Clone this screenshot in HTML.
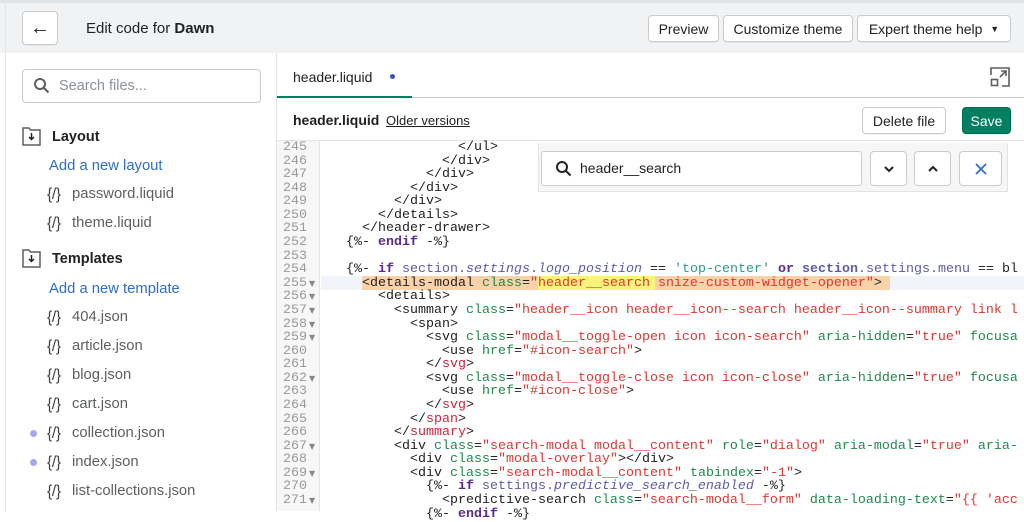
<!DOCTYPE html>
<html><head><meta charset="utf-8"><style>
*{margin:0;padding:0;box-sizing:border-box}
body{width:1024px;height:511px;overflow:hidden;background:#fff;font-family:"Liberation Sans",sans-serif;color:#202223;position:relative}
.abs{position:absolute}
.btn{position:absolute;border:1px solid #c9cccf;border-radius:4px;background:#fff;font-size:14px;color:#202223;display:flex;align-items:center;justify-content:center;box-shadow:0 1px 0 rgba(0,0,0,.05)}
.side{font-size:14px;position:absolute;white-space:nowrap}
.ic{position:absolute;left:47px;font-size:15.5px;color:#3d4145;letter-spacing:-0.3px}
.fn{position:absolute;left:72px;color:#5c5f62;font-size:14.8px}
.dot{position:absolute;left:30px;width:7px;height:7px;border-radius:50%;background:#a4a8ee}
pre{position:absolute;left:314px;font-family:"Liberation Mono",monospace;font-size:13.33px;line-height:13.58px;color:#222;white-space:pre}
.g{position:absolute;left:277px;width:43px;top:141px;bottom:0;background:#f7f7f7;border-right:1px solid #e4e4e4}
.ln{position:absolute;left:277px;width:30px;text-align:right;font-family:"Liberation Mono",monospace;font-size:13.33px;line-height:13.58px;color:#999;white-space:pre}
.fa{position:absolute;left:309px;font-family:"DejaVu Sans",sans-serif;font-size:8px;line-height:13.58px;color:#888;white-space:pre}
.a{color:#1e8a4c}.s{color:#e8332f}.k{color:#5b2a95;font-weight:bold}.v{color:#5c5ca8}.i{font-style:italic}.t{color:#2b9a8e}.r{color:#d4223a}
</style></head><body>
<div class="abs" style="left:0;top:0;width:1024px;height:3px;background:#e1e3e5"></div>
<div class="abs" style="left:0;top:3px;width:1024px;height:50px;background:#f1f2f4"></div>
<div class="abs" style="left:5px;top:3px;width:1px;height:508px;background:#e1e3e5"></div>
<div class="btn" style="left:22px;top:11px;width:36px;height:34px;font-size:20px">&#8592;</div>
<div class="abs" style="left:86px;top:20px;font-size:15px">Edit code for <b>Dawn</b></div>
<div class="btn" style="left:648px;top:15px;width:71px;height:27px">Preview</div>
<div class="btn" style="left:723px;top:15px;width:130px;height:27px">Customize theme</div>
<div class="btn" style="left:857px;top:15px;width:154px;height:27px">Expert theme help&nbsp;&nbsp;<span style="font-size:9px">&#9660;</span></div>
<div class="abs" style="left:276px;top:53px;width:1px;height:458px;background:#e1e3e5"></div>
<div class="btn" style="left:22px;top:69px;width:239px;height:34px;justify-content:flex-start;padding-left:36px;color:#8c9196;box-shadow:none;font-size:14.5px">Search files...</div>
<svg class="abs" style="left:33px;top:77px" width="17" height="17" viewBox="0 0 17 17"><circle cx="7" cy="7" r="5" fill="none" stroke="#5c5f62" stroke-width="2"/><path d="M11 11l4.5 4.5" stroke="#5c5f62" stroke-width="2"/></svg>
<svg class="abs" style="left:22px;top:127px" width="19" height="19" viewBox="0 0 19 19"><path d="M1 1h6l1.5 2H18v15H1z" fill="none" stroke="#5c5f62" stroke-width="1.5"/><path d="M9.5 6v6M7 10l2.5 2.5L12 10" fill="none" stroke="#202223" stroke-width="1.5"/></svg>
<div class="side" style="left:52px;top:129px;font-weight:bold;font-size:14.5px">Layout</div>
<div class="side" style="left:49px;top:158px;color:#2c6ecb;font-size:14.8px">Add a new layout</div>
<div class="side" style="top:186px;width:276px"><span class="ic">{/}</span><span class="fn">password.liquid</span></div>
<div class="side" style="top:215px;width:276px"><span class="ic">{/}</span><span class="fn">theme.liquid</span></div>
<svg class="abs" style="left:22px;top:249px" width="19" height="19" viewBox="0 0 19 19"><path d="M1 1h6l1.5 2H18v15H1z" fill="none" stroke="#5c5f62" stroke-width="1.5"/><path d="M9.5 6v6M7 10l2.5 2.5L12 10" fill="none" stroke="#202223" stroke-width="1.5"/></svg>
<div class="side" style="left:52px;top:251px;font-weight:bold;font-size:14.5px">Templates</div>
<div class="side" style="left:49px;top:281px;color:#2c6ecb;font-size:14.8px">Add a new template</div>
<div class="side" style="top:309px;width:276px"><span class="ic">{/}</span><span class="fn">404.json</span></div>
<div class="side" style="top:338px;width:276px"><span class="ic">{/}</span><span class="fn">article.json</span></div>
<div class="side" style="top:367px;width:276px"><span class="ic">{/}</span><span class="fn">blog.json</span></div>
<div class="side" style="top:396px;width:276px"><span class="ic">{/}</span><span class="fn">cart.json</span></div>
<div class="side" style="top:425px;width:276px"><span class="dot" style="top:5px"></span><span class="ic">{/}</span><span class="fn">collection.json</span></div>
<div class="side" style="top:454px;width:276px"><span class="dot" style="top:5px"></span><span class="ic">{/}</span><span class="fn">index.json</span></div>
<div class="side" style="top:483px;width:276px"><span class="ic">{/}</span><span class="fn">list-collections.json</span></div>
<div class="abs" style="left:293px;top:69px;font-size:14px;color:#202223">header.liquid</div>
<div class="abs" style="left:390px;top:74px;width:5px;height:5px;border-radius:50%;background:#3b4fc4"></div>
<div class="abs" style="left:277px;top:97px;width:747px;height:1px;background:#c9cccf"></div>
<div class="abs" style="left:277px;top:96px;width:135px;height:2px;background:#008060"></div>
<svg class="abs" style="left:990px;top:67px" width="20" height="20" viewBox="0 0 20 20"><path d="M1 8V1h18v18h-7" fill="none" stroke="#5c5f62" stroke-width="1.6"/><rect x="1.5" y="12.5" width="6" height="6" fill="none" stroke="#5c5f62" stroke-width="1.6"/><path d="M10 10l6-6M11 4h5v5" fill="none" stroke="#5c5f62" stroke-width="1.6"/></svg>
<div class="abs" style="left:293px;top:112px;font-size:14px;font-weight:bold">header.liquid</div>
<div class="abs" style="left:386px;top:113px;font-size:13px;text-decoration:underline">Older versions</div>
<div class="btn" style="left:862px;top:107px;width:84px;height:27px">Delete file</div>
<div class="btn" style="left:962px;top:107px;width:49px;height:27px;background:#008060;border-color:#006e52;color:#fff">Save</div>
<div class="abs" style="left:277px;top:140px;width:747px;height:1px;background:#e4e5e7"></div>
<div class="g"></div>
<div class="abs" style="left:321px;top:276px;width:703px;height:14px;background:#f1f4f8"></div>
<div class="abs" style="left:362px;top:276px;width:528px;height:14px;background:#f9d2aa"></div>
<div class="abs" style="left:538px;top:276px;width:117px;height:14px;background:#fbf47c"></div>
<div class="ln" style="top:141px">245
246
247
248
249
250
251
252
253
254
255
256
257
258
259
260
261
262
263
264
265
266
267
268
269
270
271</div>
<div class="fa" style="top:141px">









&#9660;
&#9660;
&#9660;
&#9660;
&#9660;


&#9660;




&#9660;

&#9660;

&#9660;</div>
<pre style="top:141px">                  &lt;/ul&gt;
                &lt;/div&gt;
              &lt;/div&gt;
            &lt;/div&gt;
          &lt;/div&gt;
        &lt;/details&gt;
      &lt;/header-drawer&gt;
    {%- <span class="k">endif</span> -%}

    {%- <span class="k">if</span> <span class="v">section.<span class="i">settings</span>.<span class="i">logo_position</span></span> == <span class="t">'top-center'</span> <span class="k">or</span> <span class="v"><b>section</b>.settings.menu</span> == bl
      &lt;details-modal <span class="a">class</span>=<span class="s">"header__search snize-custom-widget-opener"</span>&gt;
        &lt;details&gt;
          &lt;summary <span class="a">class</span>=<span class="s">"header__icon header__icon--search header__icon--summary link l</span>
            &lt;span&gt;
              &lt;svg <span class="a">class</span>=<span class="s">"modal__toggle-open icon icon-search"</span> <span class="a">aria-hidden</span>=<span class="s">"true"</span> <span class="a">focusa</span>
                &lt;use <span class="a">href</span>=<span class="s">"#icon-search"</span>&gt;
              &lt;/<span class="r">svg</span>&gt;
              &lt;svg <span class="a">class</span>=<span class="s">"modal__toggle-close icon icon-close"</span> <span class="a">aria-hidden</span>=<span class="s">"true"</span> <span class="a">focusa</span>
                &lt;use <span class="a">href</span>=<span class="s">"#icon-close"</span>&gt;
              &lt;/<span class="r">svg</span>&gt;
            &lt;/<span class="r">span</span>&gt;
          &lt;/<span class="r">summary</span>&gt;
          &lt;div <span class="a">class</span>=<span class="s">"search-modal modal__content"</span> <span class="a">role</span>=<span class="s">"dialog"</span> <span class="a">aria-modal</span>=<span class="s">"true"</span> <span class="a">aria-</span>
            &lt;div <span class="a">class</span>=<span class="s">"modal-overlay"</span>&gt;&lt;/div&gt;
            &lt;div <span class="a">class</span>=<span class="s">"search-modal__content"</span> <span class="a">tabindex</span>=<span class="s">"-1"</span>&gt;
              {%- <span class="k">if</span> <span class="v">settings.<span class="i">predictive_search_enabled</span></span> -%}
                &lt;predictive-search <span class="a">class</span>=<span class="s">"search-modal__form"</span> <span class="a">data-loading-text</span>=<span class="s">"{{ 'acc</span>
              {%- <span class="k">endif</span> -%}</pre>
<div class="abs" style="left:538px;top:143px;width:470px;height:49px;background:#f6f6f7;border:1px solid #e1e3e5;border-top:none"></div>
<div class="abs" style="left:541px;top:151px;width:321px;height:35px;background:#fff;border:1px solid #c9cccf;border-radius:3px"></div>
<svg class="abs" style="left:555px;top:160px" width="17" height="17" viewBox="0 0 17 17"><circle cx="7" cy="7" r="5" fill="none" stroke="#202223" stroke-width="2"/><path d="M11 11l4.5 4.5" stroke="#202223" stroke-width="2"/></svg>
<div class="abs" style="left:580px;top:160px;font-size:14px">header__search</div>
<div class="btn" style="left:870px;top:151px;width:37px;height:35px;box-shadow:none"><svg width="12" height="8" viewBox="0 0 12 8"><path d="M2 2l4 4 4-4" fill="none" stroke="#202223" stroke-width="2"/></svg></div>
<div class="btn" style="left:914px;top:151px;width:37px;height:35px;box-shadow:none"><svg width="12" height="8" viewBox="0 0 12 8"><path d="M2 6l4-4 4 4" fill="none" stroke="#202223" stroke-width="2"/></svg></div>
<div class="btn" style="left:959px;top:151px;width:43px;height:35px;box-shadow:none"><svg width="12" height="12" viewBox="0 0 12 12"><path d="M1 1l10 10M11 1L1 11" stroke="#2c6ecb" stroke-width="1.8"/></svg></div>
</body></html>
